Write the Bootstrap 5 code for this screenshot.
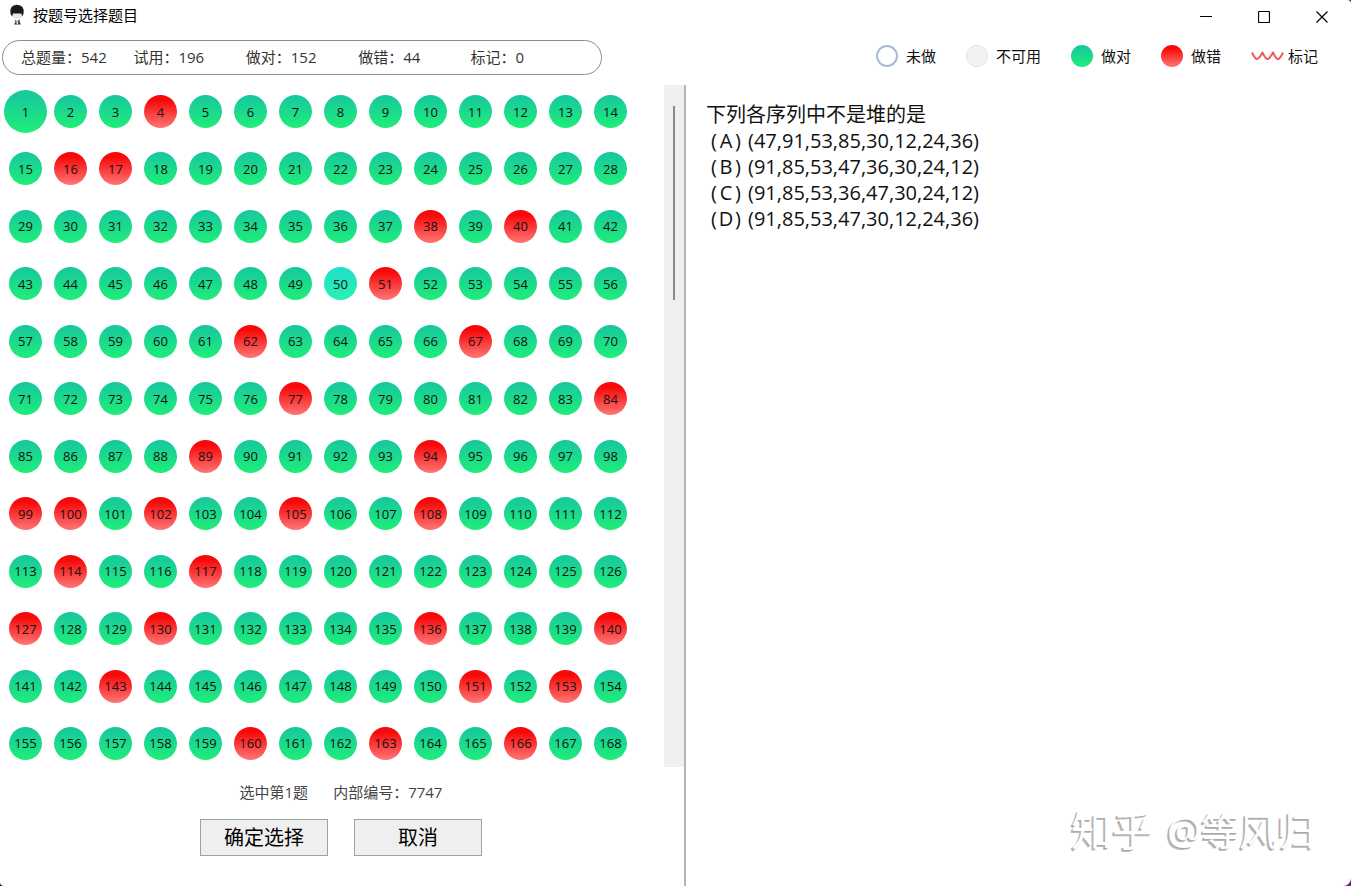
<!DOCTYPE html>
<html lang="zh-CN">
<head>
<meta charset="utf-8">
<meta name="viewport" content="width=device-width, initial-scale=1">
<title>按题号选择题目</title>
<link href="https://cdn.jsdelivr.net/npm/bootstrap@5.3.0/dist/css/bootstrap.min.css" rel="stylesheet">
<style>
  body { font-family: "Open Sans", "Noto Sans CJK SC", sans-serif; font-size: 15px; line-height: 20px; color: #111; background: linear-gradient(to right, #111, #7a1f7a); }
  .window { background: #fff; border-radius: 0 4px 8px 4px; }
  .titlebar { height: 32px; padding: 0 0 2px 9px; color: #000; }
  .titlebar button { width: 58px; height: 30px; border: 0; background: none; padding: 0; }
  .infobar { height: 53px; padding: 0 33px 0 2px; }
  .stats { width: 600px; height: 35px; border: 1px solid #8c8c8c; padding: 0 18px 2px; color: #333; margin-top: -2px; }
  .stats dl { flex: 0 0 20%; }
  .legend { gap: 30px; margin-top: -6px; }
  .dot { width: 22px; height: 22px; border-radius: 50%; }
  .dot-todo { border: 2px solid #a9bdd2; }
  .dot-off { background: #f1f4f3; border: 1px solid #dfe3e2; }
  .right-answer { background: linear-gradient(#17c6a0, #1fee78); }
  .wrong-answer { background: linear-gradient(#f80808 15%, #ff7676); }
  .hovered { background: linear-gradient(#1fe0c8, #2af0b0); }
  .picker { flex: 0 0 686px; max-width: 51%; border-right: 2px solid #b4b4b4; }
  .numbers { display: grid; grid-template-columns: repeat(14, 1fr); align-content: space-between; justify-items: center; padding: 10px 31px 7px 3px; min-height: 600px; }
  .num { width: 33px; height: 33px; border: 0; border-radius: 50%; padding: 0; font-size: 13px; line-height: 20px; color: #111; }
  .num.picked { width: 43px; height: 43px; margin: -5px; }
  .track { width: 20px; background: #efefef; padding-top: 21px; }
  .thumb { width: 2px; height: 194px; background: #8a8a8a; }
  .footer-bar { height: 119px; padding: 15px 2px 0 0; }
  .status { gap: 25px; color: #444; margin-bottom: 17px; }
  .actions { gap: 26px; }
  .btn-flat { width: 128px; height: 37px; padding: 0; font-size: 20px; line-height: 28px; color: #000; background: #efefef; border: 1px solid #93a8a1; border-radius: 0; }
  .question { padding: 17px 20px; font-size: 20px; line-height: 26px; }
  .option { padding-left: 5px; gap: 7px; }
  .tag { width: 30px; }
  .watermark { padding: 0 36px 30px; gap: 14px; font-size: 38px; line-height: 52px; color: #fff; text-shadow: -1px 1px 0 #aaa, -2px 2px 0 #bbb; }
  .brand { font-size: 41px; }
</style>
</head>
<body>
<div class="window d-flex flex-column min-vh-100">
  <header class="titlebar d-flex align-items-center">
    <svg width="16" height="22" viewBox="0 0 16 22" aria-hidden="true">
      <path d="M3.500 8h9.500v4q-1 3-4.700 3T3.500 12z" fill="#eee6e0"/>
      <path d="M1.500 10Q0 1 8 .8q8 .2 6.500 9.200L13 12.500l-.5-3H4l-.8 3z" fill="#191919"/>
      <path d="M5.500 15.500l2.500 1.500 3-1.500-.5 2 1.500 3H5l1.500-3z" fill="#444"/>
      <path d="M7.500 17h1.500v3H7.500z" fill="#ddd"/>
    </svg>
    <span class="ps-2 me-auto">按题号选择题目</span>
    <button type="button" aria-label="最小化"><svg width="12" height="12"><path d="M0 5.500h12" stroke="#000"/></svg></button>
    <button type="button" aria-label="最大化"><svg width="12" height="12"><rect x=".5" y=".5" width="11" height="11" rx="1" fill="none" stroke="#000" stroke-width="1.200"/></svg></button>
    <button type="button" aria-label="关闭"><svg width="12" height="12"><path d="M.5.5l11 11M11.500.5l-11 11" stroke="#000" stroke-width="1.200"/></svg></button>
  </header>

  <div class="infobar d-flex align-items-center justify-content-between">
    <div class="stats d-flex align-items-center rounded-pill">
      <dl class="d-flex m-0"><dt class="fw-normal">总题量：</dt><dd class="m-0">542</dd></dl>
      <dl class="d-flex m-0"><dt class="fw-normal">试用：</dt><dd class="m-0">196</dd></dl>
      <dl class="d-flex m-0"><dt class="fw-normal">做对：</dt><dd class="m-0">152</dd></dl>
      <dl class="d-flex m-0"><dt class="fw-normal">做错：</dt><dd class="m-0">44</dd></dl>
      <dl class="d-flex m-0"><dt class="fw-normal">标记：</dt><dd class="m-0">0</dd></dl>
    </div>
    <ul class="legend list-unstyled d-flex mb-0 text-nowrap">
      <li class="d-flex align-items-center gap-2"><span class="dot dot-todo"></span>未做</li>
      <li class="d-flex align-items-center gap-2"><span class="dot dot-off"></span>不可用</li>
      <li class="d-flex align-items-center gap-2"><span class="dot right-answer"></span>做对</li>
      <li class="d-flex align-items-center gap-2"><span class="dot wrong-answer"></span>做错</li>
      <li class="d-flex align-items-center gap-1"><svg width="33" height="10" aria-hidden="true"><path d="M1 1.500Q4 8 6 8T11.500 1.500Q14.500 8 16.500 8T22 1.500Q25 8 27 8T32 1.500" fill="none" stroke="#ee5a5a" stroke-width="2" stroke-linejoin="round"/></svg>标记</li>
    </ul>
  </div>

  <main class="d-flex flex-grow-1">
    <section class="picker d-flex flex-column">
      <div class="d-flex flex-grow-1">
        <div id="numbers" class="numbers flex-grow-1"></div>
        <div class="track d-flex justify-content-center"><div class="thumb"></div></div>
      </div>
      <div class="footer-bar">
        <div class="status d-flex justify-content-center"><span>选中第1题</span><span>内部编号：7747</span></div>
        <div class="actions d-flex justify-content-center">
          <button type="button" class="btn btn-flat">确定选择</button>
          <button type="button" class="btn btn-flat">取消</button>
        </div>
      </div>
    </section>
    <section class="d-flex flex-column justify-content-between flex-grow-1">
      <div class="question">
        <div>下列各序列中不是堆的是</div>
        <div class="option d-flex"><span class="tag d-flex justify-content-between"><span>(</span><span>A</span><span>)</span></span><span>(47,91,53,85,30,12,24,36)</span></div>
        <div class="option d-flex"><span class="tag d-flex justify-content-between"><span>(</span><span>B</span><span>)</span></span><span>(91,85,53,47,36,30,24,12)</span></div>
        <div class="option d-flex"><span class="tag d-flex justify-content-between"><span>(</span><span>C</span><span>)</span></span><span>(91,85,53,36,47,30,24,12)</span></div>
        <div class="option d-flex"><span class="tag d-flex justify-content-between"><span>(</span><span>D</span><span>)</span></span><span>(91,85,53,47,30,12,24,36)</span></div>
      </div>
      <div class="watermark d-flex justify-content-end"><span class="brand">知乎</span><span>@等风归</span></div>
    </section>
  </main>
</div>
<script src="https://cdn.jsdelivr.net/npm/bootstrap@5.3.0/dist/js/bootstrap.bundle.min.js"></script>
<script>
  const wrong = new Set([4, 16, 17, 38, 40, 51, 62, 67, 77, 84, 89, 94, 99, 100, 102, 105, 108, 114, 117, 127, 130, 136, 140, 143, 151, 153, 160, 163, 166]);
  const grid = document.getElementById('numbers');
  for (let n = 1; n <= 168; n++) {
    const b = document.createElement('button');
    b.type = 'button';
    b.className = 'num ' + (wrong.has(n) ? 'wrong-answer' : n === 50 ? 'hovered' : 'right-answer') + (n === 1 ? ' picked' : '');
    b.textContent = n;
    grid.append(b);
  }
</script>
</body>
</html>
